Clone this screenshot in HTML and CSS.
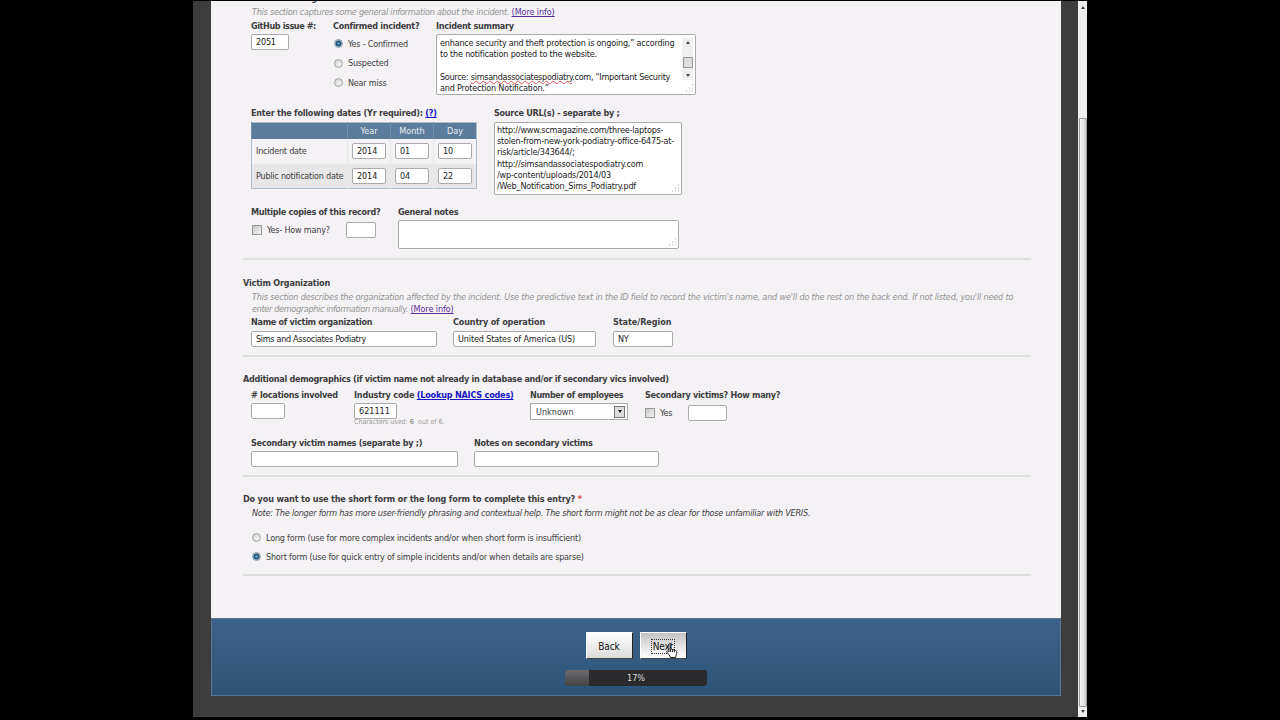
FILE: index.html
```
<!DOCTYPE html>
<html lang="en">
<head>
  <meta charset="UTF-8">
  <title>VERIS incident form</title>
  <link rel="stylesheet" href="styles.css">
</head>
<body>
  <div class="browser">
    <div class="page">
      <div class="sheet">
        <form class="survey">
          <section class="section tracking">
            <h2>Incident Tracking</h2>
            <p class="desc">This section captures some general information about the incident. <a class="visited" href="#">(More info)</a></p>
            <div class="row">
              <div class="field issue">
                <label>GitHub issue #:</label>
                <div class="input">2051</div>
              </div>
              <div class="field confirmed">
                <label>Confirmed incident?</label>
                <div class="option"><i class="radio on"></i><span>Yes - Confirmed</span></div>
                <div class="option"><i class="radio"></i><span>Suspected</span></div>
                <div class="option"><i class="radio"></i><span>Near miss</span></div>
              </div>
              <div class="field">
                <label>Incident summary</label>
                <div class="textarea summary">
                  <div class="text">enhance security and theft protection is ongoing,” according<br>to the notification posted to the website.<br><br><span class="source">Source: <span class="typo">simsandassociatespodiatry</span>.com, “Important Security</span><br>and Protection Notification.”</div>
                  <div class="mini-scroll"><i class="up"></i><b></b><i class="down"></i></div>
                  <svg class="grip" width="9" height="9"><path d="M7 1h1M4 4h1M7 4h1M1 7h1M4 7h1M7 7h1"/></svg>
                </div>
              </div>
            </div>
            <div class="row dates-row">
              <div class="field dates">
                <label>Enter the following dates (Yr required): <a href="#">(?)</a></label>
                <table>
                  <tr><th></th><th>Year</th><th>Month</th><th>Day</th></tr>
                  <tr><td>Incident date</td><td><div class="input">2014</div></td><td><div class="input">01</div></td><td><div class="input">10</div></td></tr>
                  <tr class="alt"><td>Public notification date</td><td><div class="input">2014</div></td><td><div class="input">04</div></td><td><div class="input">22</div></td></tr>
                </table>
              </div>
              <div class="field">
                <label>Source URL(s) - separate by ;</label>
                <div class="textarea urls">
                  <div class="text">http://www.scmagazine.com/three-laptops-<br>stolen-from-new-york-podiatry-office-6475-at-<br>risk/article/343644/;<br>http://simsandassociatespodiatry.com<br>/wp-content/uploads/2014/03<br>/Web_Notification_Sims_Podiatry.pdf</div>
                  <svg class="grip" width="9" height="9"><path d="M7 1h1M4 4h1M7 4h1M1 7h1M4 7h1M7 7h1"/></svg>
                </div>
              </div>
            </div>
            <div class="row">
              <div class="field copies">
                <label>Multiple copies of this record?</label>
                <div class="check-line"><i class="checkbox"></i><span>Yes- How many?</span><div class="input"></div></div>
              </div>
              <div class="field">
                <label>General notes</label>
                <div class="textarea notes">
                  <svg class="grip" width="9" height="9"><path d="M7 1h1M4 4h1M7 4h1M1 7h1M4 7h1M7 7h1"/></svg>
                </div>
              </div>
            </div>
          </section>

          <section class="section victim">
            <h2>Victim Organization</h2>
            <p class="desc">This section describes the organization affected by the incident. Use the predictive text in the ID field to record the victim's name, and we'll do the rest on the back end. If not listed, you'll need to<br><span class="last">enter demographic information manually. </span><a class="visited" href="#">(More info)</a></p>
            <div class="row">
              <div class="field org">
                <label>Name of victim organization</label>
                <div class="input">Sims and Associates Podiatry</div>
              </div>
              <div class="field country">
                <label>Country of operation</label>
                <div class="input">United States of America (US)</div>
              </div>
              <div class="field state">
                <label>State/Region</label>
                <div class="input">NY</div>
              </div>
            </div>
          </section>

          <section class="section demographics">
            <h2>Additional demographics (if victim name not already in database and/or if secondary vics involved)</h2>
            <div class="row">
              <div class="field locations">
                <label># locations involved</label>
                <div class="input"></div>
              </div>
              <div class="field industry">
                <label>Industry code <a href="#">(Lookup NAICS codes)</a></label>
                <div class="input">621111</div>
                <div class="counter">Characters used: <b>6</b>&nbsp; out of 6.</div>
              </div>
              <div class="field employees">
                <label>Number of employees</label>
                <div class="select"><span>Unknown</span><i></i></div>
              </div>
              <div class="field secondary">
                <label>Secondary victims? How many?</label>
                <div class="check-line"><i class="checkbox"></i><span>Yes</span><div class="input"></div></div>
              </div>
            </div>
            <div class="row">
              <div class="field names">
                <label>Secondary victim names (separate by ;)</label>
                <div class="input"></div>
              </div>
              <div class="field sec-notes">
                <label>Notes on secondary victims</label>
                <div class="input"></div>
              </div>
            </div>
          </section>

          <section class="section form-type">
            <h2>Do you want to use the short form or the long form to complete this entry? <span class="req">*</span></h2>
            <p class="note">Note: The longer form has more user-friendly phrasing and contextual help. The short form might not be as clear for those unfamiliar with VERIS.</p>
            <div class="option"><i class="radio"></i><span>Long form (use for more complex incidents and/or when short form is insufficient)</span></div>
            <div class="option"><i class="radio on"></i><span>Short form (use for quick entry of simple incidents and/or when details are sparse)</span></div>
          </section>
        </form>

        <footer>
          <div class="buttons">
            <div class="btn">Back</div>
            <div class="btn active"><span>Next</span>
              <svg class="hand" width="12" height="16" viewBox="0 0 12 16"><path d="M3 1.2c0-1 1.6-1 1.6 0v4.6l1.5.3.3.5 1.6.2.3.6 1.5.2c.8.4.9 1 .9 1.7 0 2-.8 2.8-1 5.2H4.5C4 12.5 1.6 10.5.8 8.6c-.2-1 .8-1.2 1.3-.7l.9 1z"/><path d="M4.6 6v3M6.5 6.700v2.400M8.400 7.300v2"/></svg>
            </div>
          </div>
          <div class="progress"><div class="fill"></div><span>17%</span></div>
        </footer>
      </div>
      <div class="scrollbar"><i class="up"></i><div class="thumb"></div><i class="down"></i></div>
    </div>
  </div>
</body>
</html>
```
FILE: styles.css
```
* { box-sizing: border-box; }
body {
  margin: 0;
  background: #000;
  color: #3d3d3f;
  font-family: 'DejaVu Sans Condensed', 'DejaVu Sans', sans-serif;
  font-stretch: condensed;
  font-size: 9px;
  line-height: 12px;
  letter-spacing: -0.21px;
}
h2, p { margin: 0; }
h2, label {
  font-size: 9px;
  font-weight: 700;
  line-height: 12px;
  letter-spacing: -0.29px;
  white-space: nowrap;
}
a { color: #1414c8; }
a.visited { color: #5b2d96; font-style: normal; letter-spacing: -0.1px; }
.browser {
  height: 720px;
  padding: 1px 193px 3px;
  overflow: hidden;
}
.page {
  display: flex;
  height: 716px;
  padding-left: 18px;
  background: #3d3d3d;
}
.sheet {
  width: 850px;
  height: 695px;
  background: #f4f2f4;
  overflow: hidden;
}
.survey { height: 617px; padding: 0 30px 0 32px; }
.section { border-bottom: 2px solid #e0dfe0; }
.row { display: flex; padding-left: 8px; }
.field { display: flex; flex-direction: column; align-items: flex-start; }
.desc, .note {
  padding-left: 9px;
  font-style: italic;
  letter-spacing: -0.165px;
  color: #929292;
  white-space: nowrap;
}
.note { color: #3d3d3f; letter-spacing: -0.22px; }

.input, .textarea {
  border: 1px solid #aaa;
  border-radius: 2px;
  background: #fff;
  color: #222;
}
.input {
  height: 16px;
  padding: 0 4px;
  line-height: 14px;
  white-space: nowrap;
}
.textarea {
  position: relative;
  display: flex;
  justify-content: space-between;
  padding: 3px 2px 2px 3px;
  line-height: 11.2px;
  letter-spacing: -0.2px;
  white-space: nowrap;
}
.source { letter-spacing: -0.29px; }
.typo { text-decoration: underline wavy #e05050 0.5px; text-underline-offset: 0; text-decoration-skip-ink: none; }
.grip { position: absolute; right: 1px; bottom: 1px; stroke: #aaa; }
.option { display: flex; align-items: center; }
.radio {
  width: 9px;
  height: 9px;
  border: 1px solid #a5a5a5;
  border-radius: 50%;
  background: radial-gradient(circle at 60% 60%, #f5f5f5, #c9c9c9);
}
.radio.on {
  border-color: #8aa0b0;
  background: radial-gradient(circle, #6fb4d8 0, #154466 2.5px, #c5d5df 3.5px);
}
.checkbox {
  width: 10px;
  height: 10px;
  border: 1px solid #999;
  background: linear-gradient(135deg, #c8c8c8, #f4f4f4);
}
.check-line { display: flex; align-items: center; }

.tracking { display: flow-root; height: 259px; }
.tracking h2 { margin-top: -9px; }
.tracking .desc { margin: 2px 0; letter-spacing: -0.24px; }
.tracking .issue { width: 82px; }
.issue label { letter-spacing: -0.4px; }
.issue .input { width: 38px; }
.tracking .row:nth-of-type(1) { height: 87px; }
.field label + .input, .field label + .textarea { margin-top: 2px; }
.confirmed { width: 103px; }
.confirmed .option { height: 19.5px; gap: 5px; padding-left: 1px; }
.confirmed label + .option { margin-top: 2px; }
.summary { width: 260px; height: 61px; }
.mini-scroll {
  display: flex;
  flex-direction: column;
  align-items: center;
  width: 11px;
  height: 42px;
  background: #efeff0;
}
.mini-scroll b { width: 10px; height: 11px; margin-top: 13px; border: 1px solid #999; background: #ddd; }
.up, .down { border: 2.5px solid transparent; }
.up { border-bottom: 3px solid #444; border-top: 0; margin-top: 3px; }
.down { border-top: 3px solid #444; border-bottom: 0; margin-top: 6px; }
.dates { width: 243px; }
.dates label { letter-spacing: -0.23px; }
.dates-row { height: 99px; }
table { width: 226px; margin-top: 3px; border: 1px solid #aebdca; border-collapse: collapse; table-layout: fixed; white-space: nowrap; }
th { height: 16px; padding: 0; background: #5b7c9b; color: #e8eef4; font-weight: 400; letter-spacing: 0; border-left: 1px solid #7490aa; }
th:first-child { width: 96px; }
td { height: 25px; padding: 0 4px; }
td:first-child { letter-spacing: -0.23px; }
td + td { padding: 0 4px; border-left: 1px solid #e8e8e8; }
.alt { background: #e8e7e8; }
td .input { width: 34px; letter-spacing: -0.1px; }
.dates-row .field label + .textarea { margin-top: 3px; padding: 2px; }
.urls { width: 188px; height: 73px; }
.copies { width: 147px; }
.copies .check-line { margin-top: 4px; padding-left: 1px; }
.copies span { margin-left: 5px; width: 79px; }
.copies .input { width: 30px; }
.notes { width: 281px; height: 29px; }

.victim { height: 97px; padding-top: 17px; }
.victim h2 { letter-spacing: -0.18px; }
.victim .desc { margin: 2px 0 1px; }
.victim .last { letter-spacing: -0.32px; }
.victim .field label + .input { margin-top: 3px; }
.org { width: 202px; }
.org .input { width: 186px; letter-spacing: -0.31px; }
.country { width: 160px; }
.country label { letter-spacing: -0.16px; }
.country .input { width: 143px; letter-spacing: -0.14px; }
.state label { letter-spacing: -0.05px; }
.state .input { width: 60px; }

.demographics { height: 120px; padding-top: 16px; }
.demographics .row { margin-top: 4px; height: 44px; }
.locations { width: 103px; }
.locations .input { width: 34px; }
.industry { width: 176px; }
.industry label { letter-spacing: -0.2px; }
.industry .input { width: 43px; letter-spacing: 0; }
.counter { margin-top: -1px; font-size: 7px; line-height: 9px; letter-spacing: 0; color: #999; }
.employees { width: 115px; }
.employees label { letter-spacing: -0.36px; }
.select {
  display: flex;
  justify-content: space-between;
  align-items: center;
  width: 98px;
  height: 17px;
  margin-top: 2px;
  padding: 1px 2px 1px 5px;
  border: 1px solid #aaa;
  background: #fff;
  letter-spacing: 0;
}
.select i { display: flex; align-items: center; justify-content: center; width: 11px; height: 12px; border: 1px solid #777; background: #ddd; }
.select i::after { content: ""; border: 2.5px solid transparent; border-top: 3px solid #111; border-bottom: 0; }
.secondary .check-line { margin-top: 4px; }
.secondary span { width: 28px; margin-left: 5px; }
.secondary .input { width: 39px; }
.names { width: 223px; }
.names .input { width: 207px; }
.sec-notes .input { width: 185px; }

.form-type { height: 99px; padding-top: 16px; }
.form-type h2 { letter-spacing: -0.16px; }
.req { color: #e04040; }
.note { margin: 2px 0 9px; }
.form-type .option { height: 19px; gap: 5px; padding-left: 9px; }

footer {
  height: 78px;
  padding-top: 13px;
  background: linear-gradient(#3d638b, #2d5478);
  border: 1px solid #56799b;
}
.buttons { display: flex; justify-content: center; gap: 7px; }
.btn {
  position: relative;
  width: 47px;
  height: 27px;
  border: 1px solid #fff;
  border-right-color: #222;
  border-bottom-color: #444;
  background: linear-gradient(#fff, #dcdcdc);
  color: #111;
  font-size: 10px;
  letter-spacing: -0.1px;
  line-height: 27px;
  text-align: center;
}
.btn.active { background: linear-gradient(#c4c4c4, #fff); }
.btn.active span { padding: 1px; border: 1px dotted #333; }
.hand { position: absolute; left: 25px; top: 10px; fill: #fff; stroke: #111; stroke-width: 0.9; }
.progress {
  position: relative;
  width: 142px;
  height: 16px;
  margin: 11px auto 0;
  border-radius: 3px;
  background: #2b2b2d;
  overflow: hidden;
  color: #ddd;
  letter-spacing: 0;
  line-height: 17px;
  text-align: center;
}
.fill { position: absolute; left: 0; top: 0; width: 17%; height: 100%; background: linear-gradient(#6a6a6c, #444446); }
.progress span { position: relative; }
.scrollbar {
  display: flex;
  flex-direction: column;
  align-items: center;
  width: 9px;
  height: 716px;
  margin-left: 17px;
  background: #efeff0;
}
.scrollbar .up { margin-top: 5px; }
.scrollbar .thumb { width: 8px; height: 589px; margin-top: 109px; border: 1px solid #999; border-radius: 1px; background: linear-gradient(90deg, #f5f5f5, #cfcfd1); }
.scrollbar .down { margin-top: 3px; }
```
